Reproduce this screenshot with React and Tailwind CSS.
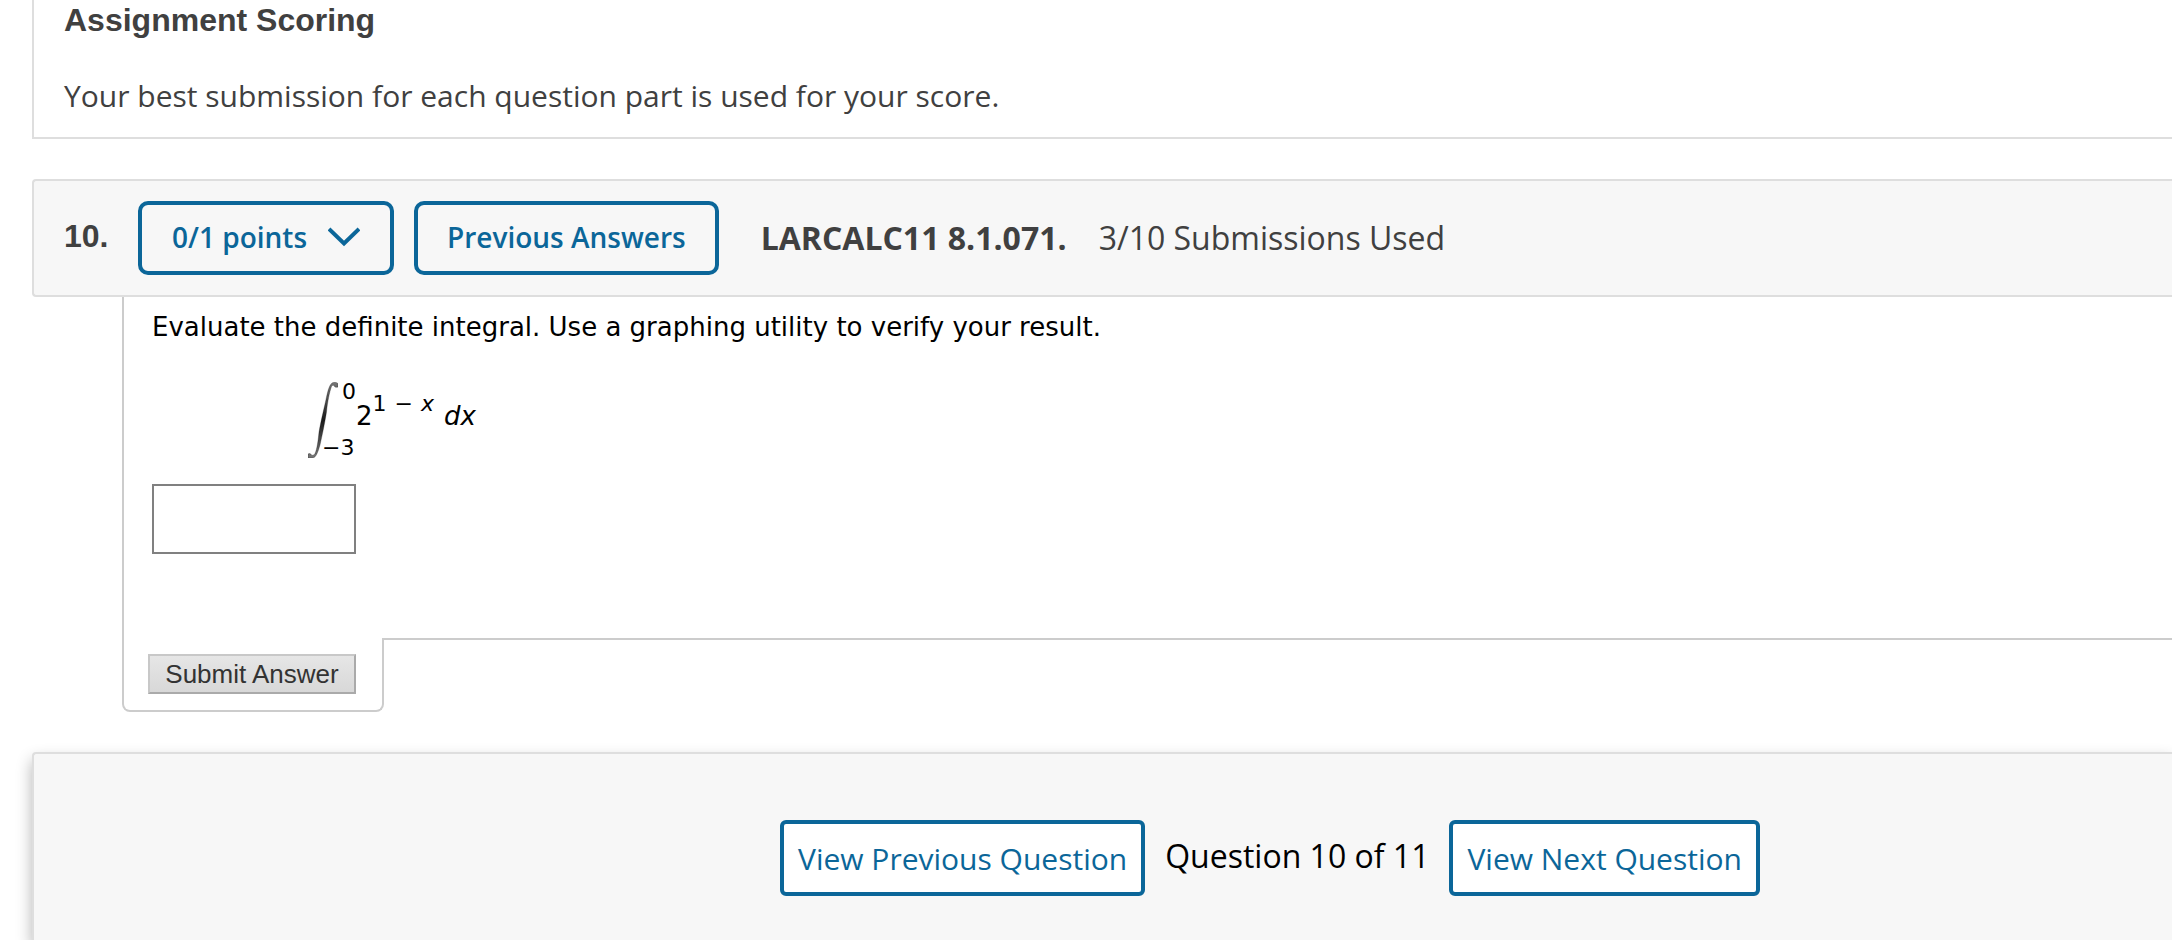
const ChevronDown = () => (
  <svg xmlns="http://www.w3.org/2000/svg" className="h-5 w-8" fill="none" viewBox="0 0 32 20" stroke="currentColor" aria-hidden="true">
    <path strokeWidth={4} strokeLinecap="butt" d="M1 2L16 16.5L31 2" />
  </svg>
);

const IntegralSign = () => (
  <svg xmlns="http://www.w3.org/2000/svg" className="h-[76px] w-[30px]" viewBox="0 0 30 76" aria-hidden="true">
    <defs>
      <linearGradient id="integral" x1="0" y1="0" x2="0" y2="1">
        <stop offset="0" stopColor="#777" />
        <stop offset="0.5" stopColor="#1a1a1a" />
        <stop offset="1" stopColor="#777" />
      </linearGradient>
    </defs>
    <path
      fill="url(#integral)"
      stroke="#000"
      strokeOpacity="0.25"
      d="M30 1.5C28 0 25.500 0 24 1C21.500 3 20 8 18.500 15C16.500 25 13 38 11 50C10 60 9 67 7 71.500C6 73.500 4 73.500 3.500 73C3 71.500 1 71 0 72V76H5C8 75.500 10 70 12 63C14 54 17 40 18.500 30C19.500 20 21.500 10 23.500 4.500C24.500 2.800 26 3 26.500 4.500C27.500 5.500 29 5.500 30 5Z"
    />
  </svg>
);

const AssignmentScoring = () => (
  <section className="border-b-2 border-l-2 border-[#dedede] pb-[21px] pl-[30px]">
    <h2 className="font-['Liberation_Sans',Arial,sans-serif] text-[32px] leading-10 font-bold">Assignment Scoring</h2>
    <p className="mt-9 text-[30px] leading-10">Your best submission for each question part is used for your score.</p>
  </section>
);

const QuestionHeader = () => (
  <header className="mt-10 flex items-center rounded-l border-2 border-r-0 border-[#dedede] bg-[#f7f7f7] py-5 pl-[30px]">
    <span className="w-[74px] pb-1 font-['Liberation_Sans',Arial,sans-serif] text-[32px] leading-10 font-bold">10.</span>
    <button type="button" className="flex h-[74px] items-center gap-[21px] rounded-[10px] border-4 border-[#0b6699] px-[30px] pb-0.5 text-[28px] leading-[38px] font-semibold text-[#0b6699]">
      0/1 points
      <ChevronDown />
    </button>
    <button type="button" className="ml-5 h-[74px] rounded-[10px] border-4 border-[#0b6699] px-[29px] pb-0.5 text-[28px] leading-[38px] font-semibold text-[#0b6699]">
      Previous Answers
    </button>
    <span className="ml-[42px] text-[32px] leading-10 font-bold">LARCALC11 8.1.071.</span>
    <span className="ml-8 text-[32px] leading-10">3/10 Submissions Used</span>
  </header>
);

const DefiniteIntegral = () => (
  <div className="mt-[37px] ml-[156px] flex items-stretch text-[26px] leading-8">
    <IntegralSign />
    {/* Limits */}
    <div className="-ml-4 flex flex-col justify-between text-[22px] leading-5">
      <span className="ml-5">0</span>
      <span>−3</span>
    </div>
    <div className="flex pt-2">
      <span className="pt-2.5">2</span>
      <span className="flex gap-2 text-[22px] leading-7">
        <span>1</span>
        <span>−</span>
        <i>x</i>
      </span>
      <i className="ml-2.5 pt-2.5">dx</i>
    </div>
  </div>
);

const Question = () => (
  <form className="ml-[90px]" onSubmit={(e) => e.preventDefault()}>
    <div className="border-l-2 border-[#ccc] pt-3 pb-[84px] pl-7 font-['Verdana','DejaVu_Sans',sans-serif] text-[26px] leading-9 text-black">
      <label htmlFor="answer">Evaluate the definite integral. Use a graphing utility to verify your result.</label>
      <DefiniteIntegral />
      <input id="answer" type="text" className="mt-[26px] block h-[70px] w-[204px] border-2 border-[#808080] bg-white px-3" />
    </div>

    {/* Submit tab */}
    <div className="flex">
      <div className="w-[262px] rounded-b-lg border-2 border-t-0 border-[#ccc] py-4 pl-6">
        <button
          type="submit"
          className="h-10 w-[208px] border-2 border-t-[#c8c8c8] border-r-[#aaa] border-b-[#aaa] border-l-[#c8c8c8] bg-gradient-to-b from-[#e6e6e6] to-[#d8d8d8] font-['Liberation_Sans',Arial,sans-serif] text-[26px] leading-8 text-[#333]"
        >
          Submit Answer
        </button>
      </div>
      <div className="-ml-0.5 flex-1 border-t-2 border-[#ccc]" />
    </div>
  </form>
);

const QuestionNav = () => (
  <nav className="mt-10 flex grow items-start justify-center gap-5 rounded-tl border-t-2 border-l-2 border-[#dedede] bg-[#f7f7f7] pt-[66px] pb-11 pl-[334px] shadow-[0_8px_16px_rgba(0,0,0,0.3)]">
    <button type="button" className="h-[76px] rounded-md border-4 border-[#0b6699] bg-white px-3.5 pt-0.5 text-[30px] leading-10 text-[#0b6699]">
      View Previous Question
    </button>
    <span className="text-[32px] leading-[72px] text-black">Question 10 of 11</span>
    <button type="button" className="h-[76px] rounded-md border-4 border-[#0b6699] bg-white px-3.5 pt-0.5 text-[30px] leading-10 text-[#0b6699]">
      View Next Question
    </button>
  </nav>
);

const App = () => {
  return (
    <main className="flex min-h-screen flex-col overflow-hidden bg-white pl-8 font-['Open_Sans','Noto_Sans',sans-serif] text-[#404040]">
      <AssignmentScoring />
      <QuestionHeader />
      <Question />
      <QuestionNav />
    </main>
  );
};

export default App;
